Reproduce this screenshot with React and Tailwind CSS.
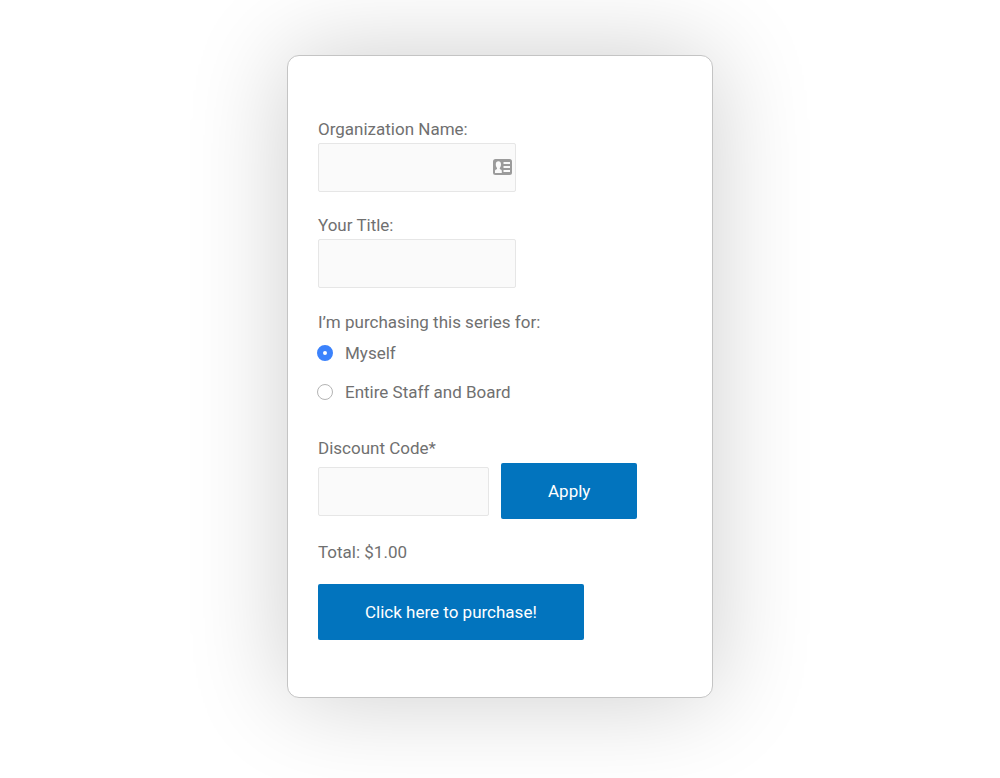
import { useState } from "react";

const purchaseOptions = [
	{ value: "myself", label: "Myself" },
	{ value: "staff", label: "Entire Staff and Board" },
];

const inputStyle =
	"block h-[49px] rounded-xs border border-[#e6e6e6] bg-[#fafafa] px-3 outline-none";
const buttonStyle =
	"h-14 rounded-xs bg-[#0274be] px-[47px] text-white whitespace-nowrap cursor-pointer";

function ContactCardIcon() {
	return (
		<svg
			viewBox="0 0 19 16"
			className="pointer-events-none absolute right-1 top-4 h-4 w-[19px]"
			aria-hidden="true"
		>
			<rect width="19" height="16" rx="2.5" fill="#9b9b9b" />
			<path
				d="M2 14v-2c0-1 .8-1.5 2-2 .2-.6 0-1-.3-1.600C3 7.500 2.800 6.300 2.800 5.200c0-1.900 1-3 2.600-3S8 3.300 8 5.200c0 1.100-.2 2.300-.9 3.200-.3.6-.5 1-.3 1.600 1.200.5 2 1 2 2v2z"
				fill="#fafafa"
			/>
			<path d="M10.500 3H17v2h-6.500zM10.500 7H17v2h-6.500zM10.500 11H17v2h-6.500z" fill="#fafafa" />
		</svg>
	);
}

export default function App() {
	const [option, setOption] = useState("myself");

	return (
		<div className="min-h-screen bg-white px-4 pt-[55px] pb-20 font-['Roboto',sans-serif] text-[17px] leading-7 text-[#707070]">
			<form
				onSubmit={(e) => e.preventDefault()}
				className="mx-auto w-full max-w-[426px] rounded-xl border border-[#c4c4c4] bg-white px-[30px] pt-[59px] pb-[57px] shadow-[0_0_100px_rgba(0,0,0,0.2)]"
			>
				<label htmlFor="organization" className="block">
					Organization Name:
				</label>
				<div className="relative w-[198px]">
					<input id="organization" type="text" className={`${inputStyle} w-full`} />
					<ContactCardIcon />
				</div>

				<label htmlFor="title" className="mt-[19px] block">
					Your Title:
				</label>
				<input id="title" type="text" className={`${inputStyle} w-[198px]`} />

				<fieldset className="mt-5">
					<legend>I’m purchasing this series for:</legend>
					<div className="mt-[3px] flex flex-col gap-[11px]">
						{purchaseOptions.map((o) => (
							<label key={o.value} className="-ml-px flex items-center gap-3">
								<input
									type="radio"
									name="purchase"
									value={o.value}
									checked={option === o.value}
									onChange={() => setOption(o.value)}
									className="size-4 appearance-none rounded-full border border-[#b4b4b4] bg-white checked:border-[6px] checked:border-[#3b82fc]"
								/>
								{o.label}
							</label>
						))}
					</div>
				</fieldset>

				<label htmlFor="discount" className="mt-7 block">
					Discount Code*
				</label>
				<div className="mt-px flex items-center gap-3">
					<input id="discount" type="text" className={`${inputStyle} w-[171px]`} />
					<button type="button" className={buttonStyle}>
						Apply
					</button>
				</div>

				<p className="mt-[19px]">Total: $1.00</p>

				<button type="submit" className={`${buttonStyle} mt-[18px]`}>
					Click here to purchase!
				</button>
			</form>
		</div>
	);
}
